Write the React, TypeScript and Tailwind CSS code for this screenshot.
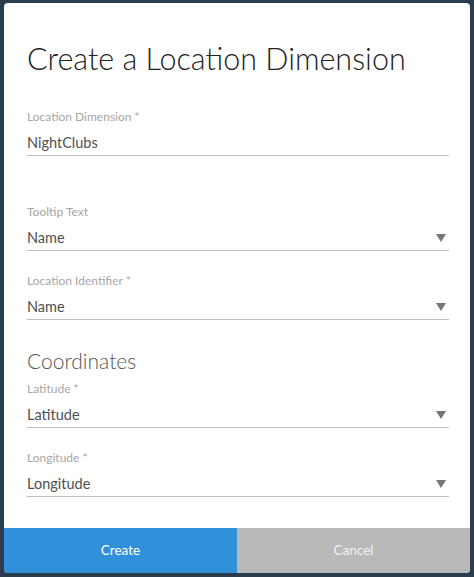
import React from "react";

const Caret: React.FC = () => (
	<svg width="10" height="8" viewBox="0 0 10 8" className="mr-[3px] shrink-0">
		<path d="M0 0 L10 0 L5 8 Z" fill="#767676" />
	</svg>
);

const SelectField: React.FC<{label: string; value: string; className?: string}> = ({
	label,
	value,
	className = "",
}) => (
	<div className={`flex flex-col ${className}`}>
		<label className="text-[12px] leading-4 text-[#a6a6a6]">{label}</label>
		<div className="mt-[6px] flex h-[24px] items-center justify-between border-b border-[#bdbdbd] box-content">
			<span className="text-[14.5px] text-[#505050]">{value}</span>
			<Caret />
		</div>
	</div>
);

export default function App() {
	return (
		<div
			className="flex h-[577px] w-[474px] bg-[#2c3e4d] pt-[3px] pb-[4px] pl-[4px] pr-[4px]"
			style={{fontFamily: "Lato, 'Open Sans', sans-serif"}}
		>
			<div className="flex w-full flex-col overflow-hidden rounded-[4px] bg-white">
				<div className="flex flex-1 flex-col px-[23px] pr-[21px]">
					<h1 className="mt-[37px] text-[30.5px] font-light leading-9 text-[#222222]">
						Create a Location Dimension
					</h1>

					<div className="mt-[33px] flex flex-col">
						<label className="text-[12px] leading-4 text-[#a6a6a6]">
							Location Dimension *
						</label>
						<div className="mt-[6px] flex h-[24px] items-center border-b border-[#bdbdbd] box-content">
							<span className="text-[14.5px] text-[#505050]">NightClubs</span>
						</div>
					</div>

					<SelectField label="Tooltip Text" value="Name" className="mt-[48px]" />
					<SelectField label="Location Identifier *" value="Name" className="mt-[22px]" />

					<h2 className="mt-[27px] text-[21px] font-light leading-7 text-[#555555]">
						Coordinates
					</h2>

					<SelectField label="Latitude *" value="Latitude" className="mt-[6px]" />
					<SelectField label="Longitude *" value="Longitude" className="mt-[22px]" />
				</div>

				<div className="flex h-[45px]">
					<button className="flex-1 bg-[#3090d9] text-[13.5px] text-white">Create</button>
					<button className="flex-1 bg-[#b9b9b9] text-[13.5px] text-[#f2f2f2]">Cancel</button>
				</div>
			</div>
		</div>
	);
}
